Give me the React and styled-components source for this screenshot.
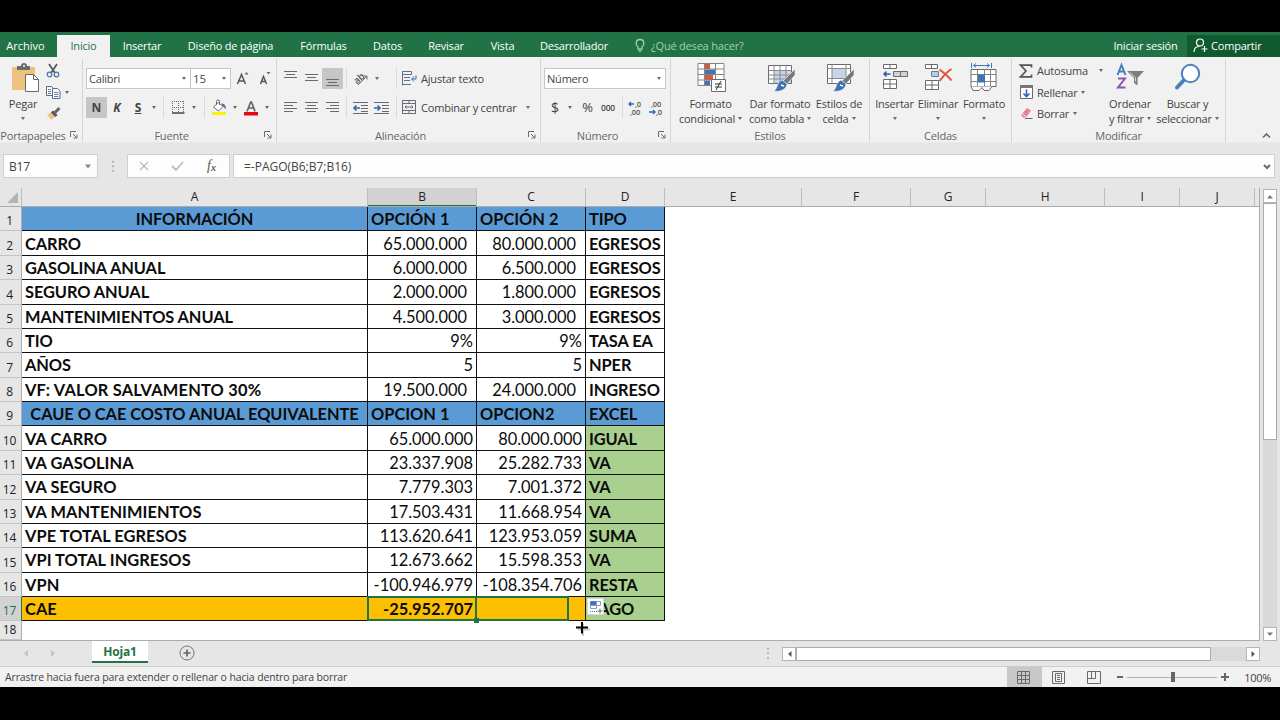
import styled, { createGlobalStyle } from 'styled-components';

const GlobalStyle = createGlobalStyle`
  * {
    box-sizing: border-box;
  }
  body {
    margin: 0;
    background: #000;
    overflow: hidden;
  }
`;

const Screen = styled.div`
  width: 1280px;
  height: 720px;
  padding: 32px 0 33px;
  background: #000;
  color: #444;
  font-family: 'Open Sans', 'Noto Sans', sans-serif;
  font-size: 11px;
  letter-spacing: -0.2px;
  line-height: 15px;
`;

const Window = styled.div`
  height: 655px;
  display: flex;
  flex-direction: column;
  background: #e6e6e6;
  overflow: hidden;
`;

/* ---------- tabs ---------- */

const TabBar = styled.nav`
  height: 25px;
  flex: none;
  display: flex;
  align-items: flex-end;
  background: #217346;
  color: #fff;
`;

const Tab = styled.div`
  width: ${({ $w }) => $w}px;
  height: 22px;
  display: flex;
  justify-content: center;
  align-items: center;
  padding: 0 ${({ $pull }) => $pull || 0}px 2px 0;
  letter-spacing: ${({ $pull }) => ($pull ? 0 : -0.2)}px;
  white-space: nowrap;
  background: ${({ $active }) => ($active ? '#f1f1f1' : 'transparent')};
  color: ${({ $active }) => ($active ? '#217346' : '#fff')};
`;

const Hint = styled.div`
  height: 22px;
  flex: 1;
  display: flex;
  align-items: center;
  gap: 6px;
  padding: 0 0 2px 15px;
  color: #a3cdb5;
`;

const Share = styled.div`
  width: 93px;
  height: 22px;
  display: flex;
  align-items: center;
  gap: 3px;
  padding: 0 0 2px 6px;
  background: #0f5a2f;
`;

/* ---------- ribbon ---------- */

const Ribbon = styled.section`
  height: 86px;
  flex: none;
  display: flex;
  background: #f1f1f1;
  border-bottom: 1px solid #e9e9e9;
`;

const GroupBox = styled.div`
  width: ${({ $w }) => $w}px;
  height: 83px;
  margin-top: 2px;
  display: flex;
  flex-direction: column;
  border-right: 1px solid #d4d4d4;
`;

const GroupBody = styled.div`
  height: 69px;
  display: flex;
  flex-direction: ${({ $stack }) => ($stack ? 'column' : 'row')};
  padding: ${({ $pad }) => $pad || '0'};
`;

const GroupFoot = styled.div`
  height: 15px;
  margin-top: 1px;
  display: flex;
  align-items: center;
  color: #666;
`;

const GroupName = styled.span`
  flex: 1;
  padding-top: 1px;
  text-align: center;
  white-space: nowrap;
`;

const Launcher = styled.span`
  width: 16px;
  display: flex;
  justify-content: center;
`;

const Line = styled.div`
  display: flex;
  align-items: center;
  height: ${({ $h }) => $h || 29}px;
  white-space: nowrap;
`;

const Slot = styled.div`
  width: ${({ $w }) => $w}px;
  height: 21px;
  flex: none;
  display: flex;
  align-items: center;
  justify-content: center;
  background: ${({ $on }) => ($on ? '#c6c6c6' : 'transparent')};
`;

const Rule = styled.div`
  width: 1px;
  height: 21px;
  flex: none;
  background: #dadada;
`;

const Select = styled.div`
  width: ${({ $w }) => $w}px;
  height: 21px;
  display: flex;
  align-items: center;
  justify-content: space-between;
  padding: 0 4px 0 2px;
  margin-left: ${({ $join }) => ($join ? '-1px' : '0')};
  background: #fff;
  border: 1px solid #c6c6c6;
`;

const Arrow = styled.i`
  width: 0;
  height: 0;
  flex: none;
  border-left: 2.5px solid transparent;
  border-right: 2.5px solid transparent;
  border-top: 3px solid #6a6a6a;
`;

const Glyph = styled.span`
  font-size: ${({ $size }) => $size || 12}px;
  font-weight: ${({ $bold }) => $bold || 400};
  font-style: ${({ $italic }) => ($italic ? 'italic' : 'normal')};
  text-decoration: ${({ $under }) => ($under ? 'underline' : 'none')};
  letter-spacing: ${({ $ls }) => $ls || 0}px;
`;

const Caption = styled.span`
  letter-spacing: ${({ $ls }) => $ls ?? -0.2}px;
  white-space: nowrap;
`;

const BigButton = styled.div`
  width: ${({ $w }) => $w}px;
  flex: none;
  display: flex;
  flex-direction: column;
  align-items: center;
  padding-top: 4px;
`;

const BigLabel = styled.div`
  height: 15px;
  display: flex;
  align-items: center;
  gap: 3px;
  white-space: nowrap;
`;

const BigIcon = styled.div`
  height: 33px;
  padding-left: ${({ $dx }) => $dx || 0}px;
`;

const SmallColumn = styled.div`
  width: ${({ $w }) => $w}px;
  flex: none;
  display: flex;
  flex-direction: column;
  padding-top: 1px;
`;

const SmallItem = styled.div`
  height: 21.4px;
  display: flex;
  align-items: center;
  gap: 4px;
`;

const Collapse = styled.div`
  flex: 1;
  display: flex;
  justify-content: flex-end;
  align-items: flex-end;
  padding: 0 9px 3px 0;
`;

/* ---------- formula bar ---------- */

const FormulaBar = styled.div`
  height: 45px;
  flex: none;
  display: flex;
  padding: 11px 5px 10px 3px;
`;

const FieldBox = styled.div`
  width: ${({ $w }) => ($w ? `${$w}px` : 'auto')};
  flex: ${({ $w }) => ($w ? 'none' : 1)};
  display: flex;
  align-items: center;
  justify-content: space-between;
  padding: ${({ $pad }) => $pad};
  background: #fdfdfd;
  border: 1px solid #cfcfcf;
  font-size: 12px;
`;

const Dots = styled.div`
  width: 29px;
  display: flex;
  align-items: center;
  justify-content: center;
`;

/* ---------- sheet ---------- */

const Sheet = styled.div`
  height: 453px;
  flex: none;
  display: flex;
`;

const GridArea = styled.div`
  width: 1260px;
  position: relative;
  background: #fff;
  border-right: 1px solid #ababab;
  border-bottom: 1px solid #ababab;
  overflow: hidden;
`;

const COLS = '22px 346px 109px 109px 79px 137px 109px 75px 119px 75px 75px 4px';

const HeadRow = styled.div`
  display: grid;
  grid-template-columns: ${COLS};
  height: 19px;
  background: #e6e6e6;
  border-bottom: 1px solid #ababab;
`;

const ColHead = styled.div`
  display: flex;
  justify-content: center;
  align-items: center;
  padding-bottom: 1px;
  color: #222;
  font-size: 12px;
  background: ${({ $on }) => ($on ? '#d2d2d2' : 'transparent')};
  border-right: 1px solid ${({ $last }) => ($last ? 'transparent' : '#bdbdbd')};
  box-shadow: inset 0 ${({ $on }) => ($on ? '-1px' : '0')} 0 #217346;
`;

const Corner = styled(ColHead)`
  justify-content: flex-end;
  align-items: flex-end;
  padding: 0 3px 3px 0;
`;

const Row = styled.div`
  display: grid;
  grid-template-columns: 22px 346px 109px 109px 79px;
  height: ${({ $h }) => $h || 24.38}px;
`;

const RowHead = styled.div`
  display: flex;
  justify-content: center;
  align-items: flex-end;
  padding: 0 2px 2px 0;
  font-size: 12px;
  color: ${({ $on }) => ($on ? '#217346' : '#222')};
  background: ${({ $on }) => ($on ? '#d2d2d2' : '#e6e6e6')};
  border-right: 1px solid ${({ $on }) => ($on ? '#217346' : '#ababab')};
  border-bottom: 1px solid #c4c4c4;
`;

const fills = { blue: '#5b9bd5', green: '#a9d08e', gold: '#fcc000', none: '#fff' };

const Cell = styled.div`
  display: flex;
  align-items: center;
  justify-content: ${({ $align }) => $align || 'flex-start'};
  padding: 0 ${({ $inset }) => ($inset ? 9 : 3)}px 0 3px;
  background: ${({ $fill }) => fills[$fill || 'none']};
  border-right: 1px solid #111;
  border-bottom: 1px solid #111;
  color: #0c0c0c;
  font-family: Lato, sans-serif;
  font-size: 16.4px;
  font-weight: ${({ $bold }) => ($bold ? 700 : 400)};
  letter-spacing: ${({ $ls }) => $ls || 0}px;
  white-space: nowrap;
`;

const Selection = styled.div`
  position: absolute;
  left: 367px;
  top: 408px;
  width: ${({ $w }) => $w}px;
  height: 25px;
  border: 2px solid #217346;
`;

const Handle = styled.div`
  position: absolute;
  left: 474px;
  top: 430px;
  width: 5px;
  height: 5px;
  background: #217346;
`;

const FillOptions = styled.div`
  position: absolute;
  left: 587px;
  top: 410px;
  width: 17px;
  height: 17px;
  background: #fff;
  border: 1px solid #d5d5d5;
`;

const Pointer = styled.div`
  position: absolute;
  left: 574px;
  top: 432px;
`;

const VScroll = styled.div`
  flex: 1;
  display: flex;
  flex-direction: column;
  padding: 1px 3px 0 3px;
`;

const ScrollButton = styled.div`
  width: 14px;
  height: 14px;
  flex: none;
  display: flex;
  align-items: center;
  justify-content: center;
  background: #fff;
  border: 1px solid #b5b5b5;
`;

const VTrack = styled.div`
  flex: 1;
  background: #d9d9d9;
`;

const VThumb = styled.div`
  height: 237px;
  background: #fff;
  border: 1px solid #ababab;
`;

/* ---------- bottom ---------- */

const SheetTabs = styled.div`
  height: 26px;
  flex: none;
  display: flex;
  border-bottom: 1px solid #cdcdcd;
`;

const TabNav = styled.div`
  width: 92px;
  display: flex;
  align-items: center;
  gap: 23px;
  padding-left: 24px;
`;

const SheetTab = styled.div`
  width: 56px;
  height: 23px;
  margin-top: -1px;
  display: flex;
  align-items: center;
  justify-content: center;
  padding-top: 2px;
  background: #fff;
  border-bottom: 2px solid #217346;
  color: #217346;
  font-size: 12px;
  font-weight: 700;
`;

const AddSheet = styled.div`
  flex: 1;
  padding: 4px 0 0 31px;
`;

const HScroll = styled.div`
  width: 478px;
  height: 14px;
  margin: 6px 20px 0 0;
  display: flex;
  background: #dadada;
`;

const HThumb = styled.div`
  width: 415px;
  background: #fff;
  border: 1px solid #ababab;
`;

const HGap = styled.div`
  flex: 1;
`;

const StatusBar = styled.footer`
  height: 20px;
  flex: none;
  display: flex;
  align-items: center;
  background: #f1f1f1;
  color: #444;
`;

const StatusText = styled.div`
  flex: 1;
  padding-left: 5px;
  font-size: 10.5px;
  letter-spacing: -0.13px;
`;

const ViewButton = styled.div`
  width: 35px;
  height: 20px;
  display: flex;
  align-items: center;
  justify-content: center;
  padding-right: 2px;
  background: ${({ $on }) => ($on ? '#c8c8c8' : 'transparent')};
`;

const Zoom = styled.div`
  width: 168px;
  display: flex;
  align-items: center;
  padding-left: 4px;
`;

const ZoomValue = styled.span`
  width: 31px;
  text-align: right;
  letter-spacing: -0.3px;
`;

/* ---------- icons ---------- */

const Drawing = styled.svg`
  display: block;
  flex: none;
  overflow: visible;
`;

const Svg = ({ w, h, children }) => (
  <Drawing width={w} height={h} viewBox={`0 0 ${w} ${h}`} fill="none" stroke="#6a6a6a">
    {children}
  </Drawing>
);

const PasteIcon = () => (
  <Svg w={28} h={30}>
    <path d="M0 4h23v23H0z" fill="#edc27f" stroke="none" />
    <path d="M5 3h4a3 3 0 0 1 6 0h3v4H5z" fill="#6b6b6b" stroke="none" />
    <circle cx="12" cy="3" r="1" fill="#fff" stroke="none" />
    <path d="M13.500 11.500h8l5 5v12h-13z" fill="#fff" />
    <path d="M21.500 11.500v5h5" />
  </Svg>
);

const CutIcon = () => (
  <Svg w={14} h={15}>
    <path d="M3 1l6 9M11 1L5 10" stroke="#5c5c5c" strokeWidth="1.8" />
    <circle cx="3.5" cy="11.5" r="2.3" stroke="#4374a8" strokeWidth="1.2" />
    <circle cx="10.5" cy="11.5" r="2.3" stroke="#4374a8" strokeWidth="1.2" />
  </Svg>
);

const CopyIcon = () => (
  <Svg w={15} h={14}>
    <path d="M.5 1.5h5l2 2v7h-7z" fill="#fff" />
    <path d="M6.500 3.500h5l2.500 2.500v7.500H6.500z" fill="#fff" stroke="#5a6d87" />
    <path d="M2 4.500h3M2 6.500h3M2 8.500h3M8 7.500h4.500M8 9.500h4.500M8 11.500h4.500" stroke="#5b86bd" />
  </Svg>
);

const BrushIcon = () => (
  <Svg w={15} h={13}>
    <path d="M1 8l5-3 4 4-5 4c-1-2-2-3-4-5z" fill="#edc27f" stroke="none" />
    <path d="M6 4.500l4.500 4.500" stroke="#555" strokeWidth="3" />
    <path d="M9 5.500L13.500 1" stroke="#666" strokeWidth="3" />
  </Svg>
);

const LauncherIcon = () => (
  <Svg w={8} h={8}>
    <path d="M.5 6V.5H6M3 3l3.500 3.500M7 3.500V7H3.500" />
  </Svg>
);

const BorderIcon = () => (
  <Svg w={13} h={13}>
    <path d="M.5 0v12M6.500 0v12M11.500 0v12M0 .5h12M0 6.500h12" strokeDasharray="1 1" />
    <path d="M0 12h12.500" stroke="#444" strokeWidth="1.500" />
  </Svg>
);

const BucketIcon = () => (
  <Svg w={16} h={16}>
    <path d="M2.500 7L7.500 2.500l4.500 4L7.500 11z" fill="#fff" />
    <path d="M5.500 5V1.500a1.500 1.500 0 0 1 3 0V5" />
    <path d="M10.500 3.500c3 0 5 2.500 4 6-1-1-1-3-3-3z" fill="#3f70ad" stroke="none" />
    <path d="M1 12h14v3H1z" fill="#fff200" stroke="none" />
  </Svg>
);

const FontColorIcon = () => (
  <Svg w={16} h={16}>
    <path d="M4 11.500L7.700 2h.8L12 11.500M5.500 8h5" stroke="#666" strokeWidth="1.700" />
    <path d="M1 12h14v3.500H1z" fill="#e30613" stroke="none" />
  </Svg>
);

const SizeIcon = ({ up }) => (
  <Svg w={14} h={15}>
    {up ? (
      <path d="M1.500 13L5.500 3.500 9.500 13M3 10h5" stroke="#555" strokeWidth="1.500" />
    ) : (
      <path d="M2.500 13L5.500 5.500 8.500 13M3.500 10.500h4" stroke="#555" strokeWidth="1.500" />
    )}
    <path d={up ? 'M8.500 3.500l2-2.500 2 2.500z' : 'M8.500 1h4l-2 2.500z'} fill="#3f70ad" stroke="none" />
  </Svg>
);

// each entry is a [start, end] pair of one text line
const lineSets = {
  middle: [[0, 13], [2, 11], [0, 13]],
  left: [[0, 13], [0, 9], [0, 13], [0, 9]],
  center: [[0, 13], [2, 11], [0, 13], [2, 11]],
  right: [[0, 13], [4, 13], [0, 13], [4, 13]],
};

const LinesIcon = ({ kind, dy = 0 }) => (
  <Svg w={14} h={17}>
    {lineSets[kind].map(([a, b], i) => (
      <path key={i} d={`M${a} ${(kind === 'middle' ? 4.5 : 3.5) + dy + i * 3}H${b}`} />
    ))}
  </Svg>
);

const AngleIcon = () => (
  <Svg w={16} h={16}>
    <text x="1.500" y="11" transform="rotate(-42 6 9)" fill="#555" stroke="none" fontSize="9.500" fontWeight="600">ab</text>
    <path d="M5 14L13.500 5.500M10.500 5H14v3.500" />
  </Svg>
);

const IndentIcon = ({ more }) => (
  <Svg w={16} h={14}>
    <path d="M0 1.500h15M8 4.500h7M8 7.500h7M8 10.500h7M0 12.500h15" />
    <path d={more ? 'M0 7h6M3.500 4.500L6 7 3.500 9.500' : 'M1 7h6M3.500 4.500L1 7l2.500 2.500'} stroke="#2f68ad" strokeWidth="1.600" />
  </Svg>
);

const WrapIcon = () => (
  <Svg w={15} h={15}>
    <path d="M.5 3.500h9v-3h-9zM.5.5v14M2 6.500h6M2 9.500h6M0 13.500h9" stroke="#5c7089" />
    <path d="M14 4.500V8h-4M12 5.500L9.500 8l2.500 2.500" stroke="#2f68ad" />
  </Svg>
);

const MergeIcon = () => (
  <Svg w={15} h={15}>
    <path d="M.5.5h13v13H.5zM.5 3.500h13M.5 10.500h13M7 .5v3M7 10.500v3" />
    <path d="M3 7h8M4.500 5.500L3 7l1.500 1.500M9.500 5.500L11 7 9.500 8.500" stroke="#4d6f99" />
  </Svg>
);

const DecimalIcon = ({ less }) => (
  <Svg w={15} h={16}>
    <g fill="#555" stroke="none" fontSize="7.500" fontWeight="600" letterSpacing="-.2">
      <text x={less ? 2 : 7} y="7">{less ? ',00' : ',0'}</text>
      <text x={less ? 7 : 2} y="15">{less ? ',0' : ',00'}</text>
    </g>
    <path d={less ? 'M0 12h6M4 10l2 2-2 2' : 'M1 4h5M3 2L1 4l2 2'} stroke="#2f68ad" strokeWidth="1.300" />
  </Svg>
);

const CondIcon = () => (
  <Svg w={29} h={29}>
    <path d="M1 1h26v22H1z" fill="#fff" stroke="none" />
    <path d="M8 1h5v5H8zM8 12h8v5H8z" fill="#da5836" stroke="none" />
    <path d="M8 6.500h10v5H8zM8 17.500h5v5H8z" fill="#3f74b5" stroke="none" />
    <path d="M1 .5h26v22H1zM7.500.5v22M18.500.5v22M1 6h26M1 11.500h26M1 17h26" stroke="#858585" />
    <path d="M14.500 16.500h14v12h-14z" fill="#fff" />
    <path d="M18 21h7M18 24h7M24 18l-5 9" stroke="#333" />
  </Svg>
);

const Paintbrush = () => (
  <>
    <path d="M28 6v6l-8 9-4-3z" fill="#777" stroke="#f1f1f1" strokeWidth=".6" />
    <path d="M15 17l5 4c-1 6-7 8-13 7 4-2 2-8 8-11z" fill="#3b70b2" stroke="#f1f1f1" strokeWidth=".6" />
    <path d="M14 22l3 1" stroke="#fff" strokeWidth="1.500" />
  </>
);

const TableIcon = () => (
  <Svg w={29} h={29}>
    <path d="M1.500 2.500h23v18h-23z" fill="#fff" />
    <path d="M7 8h17v12H7z" fill="#c6d3ea" stroke="none" />
    <path d="M1.500 7.500h23M1.500 12h23M1.500 16h23M7 2.500v18M13 2.500v18M19 2.500v18" stroke="#8a8a8a" />
    <Paintbrush />
  </Svg>
);

const StylesIcon = () => (
  <Svg w={29} h={29}>
    <path d="M1.500 1.500h23v19h-23z" fill="#fff" />
    <path d="M6 6h14v10H6z" fill="#c6d3ea" stroke="none" />
    <path d="M1.500 5.500h23M1.500 15.500h23M6 1.500v19M20 1.500v19" stroke="#8a8a8a" />
    <Paintbrush />
  </Svg>
);

const InsertIcon = () => (
  <Svg w={26} h={28}>
    <path d="M1.500 1.500h13v4h-13zM8 1.500v4M1.500 16.500h13v9h-13zM8 16.500v9M1.500 21h13" fill="#fff" />
    <path d="M11.500 8.500h14v5h-14zM18.500 8.500v5" fill="#cfd2d6" />
    <path d="M1.500 11h7M4.500 8.500L2 11l2.500 2.500" stroke="#2f58a5" strokeWidth="1.500" />
  </Svg>
);

const DeleteIcon = () => (
  <Svg w={28} h={28}>
    <path d="M1.500 1.500h12v4h-12zM7.500 1.500v4M1.500 17.500h13v9h-13zM8 17.500v9M1.500 22h13" fill="#fff" />
    <path d="M7.500 8.500h7v5h-7z" fill="#b9cce5" stroke="#6b7c92" />
    <path d="M15.500 6.500c4 3 8 6 12 11M27.500 6c-5 3-8 7-12 12" stroke="#e15136" strokeWidth="2" />
  </Svg>
);

const FormatIcon = () => (
  <Svg w={28} h={30}>
    <path d="M1 6.500h25v17H1z" fill="#fff" />
    <path d="M1 11.500h25M1 18.500h25M7.500 6.500v17M14.500 6.500v17M20.500 6.500v17" stroke="#858585" />
    <path d="M8 11.500h7v8H8z" fill="#3c76b7" stroke="none" />
    <path d="M1 23.500l2 4h6l3-3 2 3h5l3-4" fill="#fff" />
    <path d="M1.500 0v5M21.500 0v5M3.500 2.500h16M6 .5l-2.500 2L6 4.500M17 .5l2.500 2L17 4.500" stroke="#3c76b7" />
  </Svg>
);

const SigmaIcon = () => (
  <Svg w={14} h={14}>
    <path d="M12.500 3.500V1.200H1.500L7 7l-5.500 5.800h11v-2.300" stroke="#555" strokeWidth="1.700" />
  </Svg>
);

const FillIcon = () => (
  <Svg w={14} h={14}>
    <path d="M1.500.5h12v13h-12z" fill="#fff" />
    <path d="M1 0h13v3H1z" fill="#777" stroke="none" />
    <path d="M7.500 4.500v7M4.500 8.500l3 3 3-3" stroke="#2e63a8" strokeWidth="1.600" />
  </Svg>
);

const EraserIcon = () => (
  <Svg w={14} h={13}>
    <path d="M2 8l6-7 4 2.500-5 7H4z" fill="#ea8297" stroke="none" />
    <path d="M3 6.500l4.500 3.500" stroke="#fbe9ec" />
    <path d="M6 11.500h7.500" />
  </Svg>
);

const SortIcon = () => (
  <Svg w={28} h={28}>
    <path d="M1.500 12L5.500 2l4 10M3 8.500h5" stroke="#4381bf" strokeWidth="2" />
    <path d="M2 15.500h7l-7 9h7.500" stroke="#8a56b5" strokeWidth="2" />
    <path d="M11 8h17l-6.500 7v7.500L18 20v-5z" fill="#7d7d7d" stroke="none" />
    <path d="M14 9.500l5.500 5v4" stroke="#d5d5d5" />
  </Svg>
);

const SearchIcon = () => (
  <Svg w={28} h={28}>
    <path d="M10 17l-7 7.500" stroke="#4a80bd" strokeWidth="4" strokeLinecap="round" />
    <circle cx="16.500" cy="10.500" r="8.700" fill="#fff" stroke="#4a80bd" strokeWidth="2" />
  </Svg>
);

/* ---------- data ---------- */

const tabs = [
  ['Archivo', 57], ['Inicio', 53], ['Insertar', 64], ['Diseño de página', 113], ['Fórmulas', 73],
  ['Datos', 55], ['Revisar', 62], ['Vista', 51], ['Desarrollador', 92],
];

const columns = ['A', 'B', 'C', 'D', 'E', 'F', 'G', 'H', 'I', 'J'];

const rows = [
  ['INFORMACIÓN', 'OPCIÓN 1', 'OPCIÓN 2', 'TIPO'],
  ['CARRO', '65.000.000', '80.000.000', 'EGRESOS'],
  ['GASOLINA ANUAL', '6.000.000', '6.500.000', 'EGRESOS'],
  ['SEGURO ANUAL', '2.000.000', '1.800.000', 'EGRESOS'],
  ['MANTENIMIENTOS ANUAL', '4.500.000', '3.000.000', 'EGRESOS'],
  ['TIO', '9%', '9%', 'TASA EA'],
  ['AÑOS', '5', '5', 'NPER'],
  ['VF: VALOR SALVAMENTO 30%', '19.500.000', '24.000.000', 'INGRESO'],
  ['CAUE O CAE COSTO ANUAL EQUIVALENTE', 'OPCION 1', 'OPCION2', 'EXCEL'],
  ['VA CARRO', '65.000.000', '80.000.000', 'IGUAL'],
  ['VA GASOLINA', '23.337.908', '25.282.733', 'VA'],
  ['VA SEGURO', '7.779.303', '7.001.372', 'VA'],
  ['VA MANTENIMIENTOS', '17.503.431', '11.668.954', 'VA'],
  ['VPE TOTAL EGRESOS', '113.620.641', '123.953.059', 'SUMA'],
  ['VPI TOTAL INGRESOS', '12.673.662', '15.598.353', 'VA'],
  ['VPN', '-100.946.979', '-108.354.706', 'RESTA'],
  ['CAE', '-25.952.707', '', 'PAGO'],
];

const insetRows = [2, 3, 4, 5, 8];

const labelSpacing = (n) => {
  if (n === 8) return 0.2;
  if (n >= 10) return 0.05;
  return n === 9 ? -0.04 : -0.08;
};

const Group = ({ w, name, launcher, stack, pad, children }) => (
  <GroupBox $w={w}>
    <GroupBody $stack={stack} $pad={pad}>{children}</GroupBody>
    <GroupFoot>
      <GroupName>{name}</GroupName>
      {launcher && <Launcher><LauncherIcon /></Launcher>}
    </GroupFoot>
  </GroupBox>
);

const Big = ({ w, icon, lines, dx }) => (
  <BigButton $w={w}>
    <BigIcon $dx={dx}>{icon}</BigIcon>
    <BigLabel><Caption>{lines[0]}</Caption></BigLabel>
    <BigLabel>{lines[1] && <Caption>{lines[1]}</Caption>}<Arrow /></BigLabel>
  </BigButton>
);

const SheetRow = ({ data, n }) => {
  const header = n === 1 || n === 9;
  const last = n === 17;
  const base = header ? 'blue' : last ? 'gold' : 'none';
  const numAlign = header ? 'flex-start' : 'flex-end';
  const inset = insetRows.includes(n);
  return (
    <Row>
      <RowHead $on={last}>{n}</RowHead>
      <Cell $bold $fill={base} $align={header ? 'center' : 'flex-start'} $ls={labelSpacing(n)}>{data[0]}</Cell>
      <Cell $bold={header || last} $fill={base} $align={numAlign} $inset={inset}>{data[1]}</Cell>
      <Cell $bold={header} $fill={base} $align={numAlign} $inset={inset}>{data[2]}</Cell>
      <Cell $bold $fill={n > 9 ? 'green' : base} $ls={-0.1}>{data[3]}</Cell>
    </Row>
  );
};

const App = () => (
  <Screen>
    <GlobalStyle />
    <Window>
      <TabBar>
        {tabs.map(([label, w]) => (
          <Tab key={label} $w={w} $active={label === 'Inicio'} $pull={label === 'Archivo' ? 6 : 0}>{label}</Tab>
        ))}
        <Hint>
          <Svg w={10} h={14}>
            <path d="M3 9C0 6.500.5 1.500 5 1.500S10 6.500 7 9v2H3zM3.500 13h3" stroke="#a3cdb5" strokeWidth="1.300" />
          </Svg>
          ¿Qué desea hacer?
        </Hint>
        <Tab $w={83}>Iniciar sesión</Tab>
        <Share>
          <Svg w={15} h={15}>
            <g stroke="#fff" strokeWidth="1.200">
              <circle cx="7" cy="4.500" r="3.500" />
              <path d="M1 14c0-3.500 2-5.500 5.500-5.500M11.500 8v6M8.500 11h6" />
            </g>
          </Svg>
          Compartir
        </Share>
      </TabBar>

      <Ribbon>
        <Group w={83} name="Portapapeles" launcher>
          <Big w={46} dx={5} icon={<PasteIcon />} lines={['Pegar']} />
          <SmallColumn $w={30}>
            <SmallItem><CutIcon /></SmallItem>
            <SmallItem><CopyIcon /><Arrow /></SmallItem>
            <SmallItem><BrushIcon /></SmallItem>
          </SmallColumn>
        </Group>

        <Group w={194} name="Fuente" launcher stack pad="5px 0 0 3px">
          <Line>
            <Select $w={105}>Calibri<Arrow /></Select>
            <Select $w={41} $join><Glyph $size={11.5}>15</Glyph><Arrow /></Select>
            <Slot $w={24}><SizeIcon up /></Slot>
            <Slot $w={20}><SizeIcon /></Slot>
          </Line>
          <Line>
            <Slot $w={21} $on><Glyph $bold={700}>N</Glyph></Slot>
            <Slot $w={20}><Glyph $bold={700} $italic>K</Glyph></Slot>
            <Slot $w={22}><Glyph $bold={700} $under>S</Glyph></Slot>
            <Slot $w={9}><Arrow /></Slot>
            <Slot $w={5} />
            <Rule />
            <Slot $w={28}><BorderIcon /></Slot>
            <Slot $w={4}><Arrow /></Slot>
            <Slot $w={8} />
            <Rule />
            <Slot $w={28}><BucketIcon /></Slot>
            <Slot $w={4}><Arrow /></Slot>
            <Slot $w={28}><FontColorIcon /></Slot>
            <Slot $w={4}><Arrow /></Slot>
          </Line>
        </Group>

        <Group w={264} name="Alineación" launcher stack pad="5px 0 0 3px">
          <Line>
            <Slot $w={21}><LinesIcon kind="middle" dy={-3} /></Slot>
            <Slot $w={21}><LinesIcon kind="middle" dy={0} /></Slot>
            <Slot $w={21} $on><LinesIcon kind="middle" dy={5} /></Slot>
            <Slot $w={3} />
            <Rule />
            <Slot $w={28}><AngleIcon /></Slot>
            <Slot $w={4}><Arrow /></Slot>
            <Slot $w={17} />
            <Rule />
            <Slot $w={24}><WrapIcon /></Slot>
            <Caption>Ajustar texto</Caption>
          </Line>
          <Line>
            <Slot $w={21}><LinesIcon kind="left" /></Slot>
            <Slot $w={21}><LinesIcon kind="center" /></Slot>
            <Slot $w={21}><LinesIcon kind="right" /></Slot>
            <Slot $w={3} />
            <Rule />
            <Slot $w={28}><IndentIcon /></Slot>
            <Slot $w={14}><IndentIcon more /></Slot>
            <Slot $w={7} />
            <Rule />
            <Slot $w={24}><MergeIcon /></Slot>
            <Caption>Combinar y centrar</Caption>
            <Slot $w={24}><Arrow /></Slot>
          </Line>
        </Group>

        <Group w={130} name="Número" launcher stack pad="5px 0 0 3px">
          <Line>
            <Select $w={122}>Número<Arrow /></Select>
          </Line>
          <Line>
            <Slot $w={22}><Glyph $size={14}>$</Glyph></Slot>
            <Slot $w={8}><Arrow /></Slot>
            <Slot $w={27}><Glyph $size={13}>%</Glyph></Slot>
            <Slot $w={14}><Glyph $size={8.5} $bold={600} $ls={-0.2}>000</Glyph></Slot>
            <Slot $w={7} />
            <Rule />
            <Slot $w={25}><DecimalIcon /></Slot>
            <Slot $w={17}><DecimalIcon less /></Slot>
          </Line>
        </Group>

        <Group w={199} name="Estilos" pad="0 0 0 3px">
          <Big w={73} icon={<CondIcon />} dx={1} lines={['Formato', 'condicional']} />
          <Big w={66} icon={<TableIcon />} dx={2} lines={['Dar formato', 'como tabla']} />
          <Big w={52} icon={<StylesIcon />} dx={3} lines={['Estilos de', 'celda']} />
        </Group>

        <Group w={142} name="Celdas" pad="0 0 0 3px">
          <Big w={43} icon={<InsertIcon />} lines={['Insertar']} />
          <Big w={44} icon={<DeleteIcon />} lines={['Eliminar']} />
          <Big w={48} icon={<FormatIcon />} lines={['Formato']} />
        </Group>

        <Group w={214} name="Modificar" pad="0 0 0 7px">
          <SmallColumn $w={85}>
            <SmallItem><SigmaIcon /><Caption>Autosuma</Caption><Slot $w={3} /><Arrow /></SmallItem>
            <SmallItem><FillIcon /><Caption>Rellenar</Caption><Arrow /></SmallItem>
            <SmallItem><EraserIcon /><Caption>Borrar</Caption><Arrow /></SmallItem>
          </SmallColumn>
          <Big w={52} icon={<SortIcon />} lines={['Ordenar', 'y filtrar']} />
          <Big w={63} icon={<SearchIcon />} lines={['Buscar y', 'seleccionar']} />
        </Group>

        <Collapse>
          <Svg w={9} h={7}><path d="M1 5.500l3.500-3.500L8 5.500" strokeWidth="1.600" /></Svg>
        </Collapse>
      </Ribbon>

      <FormulaBar>
        <FieldBox $w={95} $pad="0 5px">
          B17
          <Svg w={8} h={5}><path d="M1 .5h6l-3 4z" fill="#888" stroke="none" /></Svg>
        </FieldBox>
        <Dots><Svg w={2} h={11}><path d="M1 0v11" strokeDasharray="1.500 3" stroke="#999" strokeWidth="1.500" /></Svg></Dots>
        <FieldBox $w={103} $pad="0 10px">
          <Svg w={12} h={12}><path d="M2 2l8 8M10 2l-8 8" stroke="#bbb" strokeWidth="1.300" /></Svg>
          <Svg w={13} h={12}><path d="M1 6l4 4 7-8" stroke="#bbb" strokeWidth="1.800" /></Svg>
          <Svg w={14} h={15}>
            <g fill="#555" stroke="none" fontFamily="Liberation Serif" fontStyle="italic">
              <text x="2" y="11" fontSize="14">f</text>
              <text x="6" y="12" fontSize="10" fontWeight="700">x</text>
            </g>
          </Svg>
        </FieldBox>
        <Slot $w={3} />
        <FieldBox $pad="0 3px 0 10px">
          <Caption $ls={-0.02}>=-PAGO(B6;B7;B16)</Caption>
          <Svg w={8} h={7}><path d="M1 2l3 3 3-3" strokeWidth="2" /></Svg>
        </FieldBox>
      </FormulaBar>

      <Sheet>
        <GridArea>
          <HeadRow>
            <Corner><Svg w={12} h={12}><path d="M12 1v11H1z" fill="#b4b4b4" stroke="none" /></Svg></Corner>
            {columns.map((c) => (
              <ColHead key={c} $on={c === 'B'}>{c}</ColHead>
            ))}
            <ColHead $last />
          </HeadRow>
          {rows.map((r, i) => (
            <SheetRow key={i} data={r} n={i + 1} />
          ))}
          <Row $h={19}><RowHead>18</RowHead></Row>
          <Selection $w={202} />
          <Selection $w={110} />
          <Handle />
          <FillOptions>
            <Svg w={15} h={15}>
              <path d="M2.500 2.500h6v4h-6z" fill="#4472c4" stroke="#5878b0" />
              <path d="M8.500 2.500h4v4h-4zM2.500 6.500h6v3h-6z" fill="#fff" stroke="#8aa0c4" />
              <path d="M2 12.500h7" strokeDasharray="1 1" />
              <path d="M12 9.500v5M9.500 12h5" />
            </Svg>
          </FillOptions>
          <Pointer>
            <Svg w={16} h={16}>
              <path d="M9 4v12M4 9.500h12" stroke="#ccc" strokeWidth="2" />
              <path d="M8 2v11.500M2 7.500h12" stroke="#000" strokeWidth="2" />
            </Svg>
          </Pointer>
        </GridArea>
        <VScroll>
          <ScrollButton><Svg w={8} h={5}><path d="M1 4.500h6L4 1z" fill="#777" stroke="none" /></Svg></ScrollButton>
          <VTrack><VThumb /></VTrack>
          <ScrollButton><Svg w={8} h={5}><path d="M1 .5h6L4 4z" fill="#777" stroke="none" /></Svg></ScrollButton>
        </VScroll>
      </Sheet>

      <SheetTabs>
        <TabNav>
          <Svg w={4} h={7}><path d="M4 0v7L0 3.500z" fill="#c3c3c3" stroke="none" /></Svg>
          <Svg w={4} h={7}><path d="M0 0v7l4-3.500z" fill="#c3c3c3" stroke="none" /></Svg>
        </TabNav>
        <SheetTab>Hoja1</SheetTab>
        <AddSheet>
          <Svg w={16} h={16}>
            <circle cx="8" cy="8" r="7" stroke="#777" />
            <path d="M8 4.500v7M4.500 8h7" stroke="#666" strokeWidth="1.600" />
          </Svg>
        </AddSheet>
        <Dots><Svg w={2} h={11}><path d="M1 0v11" strokeDasharray="1.500 3" stroke="#999" strokeWidth="1.500" /></Svg></Dots>
        <HScroll>
          <ScrollButton><Svg w={5} h={8}><path d="M4.500 1v6L1 4z" fill="#555" stroke="none" /></Svg></ScrollButton>
          <HThumb />
          <HGap />
          <ScrollButton><Svg w={5} h={8}><path d="M.5 1v6L4 4z" fill="#555" stroke="none" /></Svg></ScrollButton>
        </HScroll>
      </SheetTabs>

      <StatusBar>
        <StatusText>Arrastre hacia fuera para extender o rellenar o hacia dentro para borrar</StatusText>
        <ViewButton $on>
          <Svg w={13} h={13}><path d="M.5.5h12v12H.5zM.5 4.500h12M.5 8.500h12M4.500.5v12M8.500.5v12" /></Svg>
        </ViewButton>
        <ViewButton>
          <Svg w={13} h={13}><path d="M.5.5h12v12H.5zM3.500 2.500h6v8h-6zM5 4.500h3M5 6.500h3M5 8.500h3" /></Svg>
        </ViewButton>
        <ViewButton>
          <Svg w={14} h={13}><path d="M.5.5h13v12H.5zM4.500.5v7M.5 7.500h8v-7" /></Svg>
        </ViewButton>
        <Zoom>
          <Svg w={124} h={12}>
            <path d="M1 6h6M105 6h8M109 2v8" stroke="#666" strokeWidth="2" />
            <path d="M11 6.500h90" stroke="#b0b0b0" />
            <path d="M55 1h4v10h-4z" fill="#666" stroke="none" />
          </Svg>
          <ZoomValue>100%</ZoomValue>
        </Zoom>
      </StatusBar>
    </Window>
  </Screen>
);

export default App;
